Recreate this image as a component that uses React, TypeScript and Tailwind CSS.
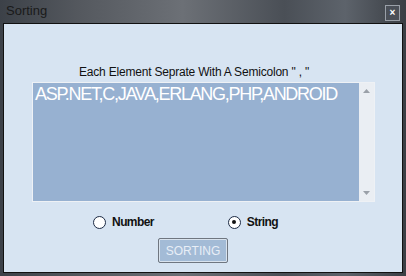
import { useState } from "react";

const Radio = ({ checked, label, onClick }: { checked: boolean; label: string; onClick: () => void }) => (
  <button type="button" onClick={onClick} className="flex items-center gap-[6px]">
    <span className="w-[13px] h-[13px] rounded-full border border-[#1c2a44] bg-white flex items-center justify-center">
      {checked && <span className="w-[4px] h-[4px] rounded-full bg-[#111]" />}
    </span>
    <span className="text-[12px] font-bold tracking-[-0.6px] text-[#111]">{label}</span>
  </button>
);

export default function App() {
  const [mode, setMode] = useState<"number" | "string">("string");

  return (
    <div
      className="w-[406px] h-[276px] flex flex-col bg-[linear-gradient(90deg,#3c4148_0%,#55595f_20%,#6c7076_45%,#4a4f56_70%,#5d636b_85%,#3a3e44_100%)]"
      style={{ fontFamily: '"Liberation Sans", Arial, sans-serif' }}
    >
      <div className="h-[23px] flex items-start justify-between pl-[6px] pr-[6px] pt-[3px]">
        <span className="text-[13px] text-[#1a1a1a] leading-[16px]">Sorting</span>
        <button
          type="button"
          className="w-[15px] h-[16px] mt-[2px] border border-[#9aa0a8] bg-[#4a4f57] flex items-center justify-center text-white text-[10px] font-bold leading-none"
        >
          ×
        </button>
      </div>
      <div className="mx-[3px] mb-[3px] flex-1 border border-[#111] bg-[#d7e4f2] flex flex-col items-center pt-[41px]">
        <div className="mr-[18px] text-[12px] tracking-[-0.2px] text-[#111] leading-[14px]">
          Each Element Seprate With A Semicolon " , "
        </div>
        <div className="mt-[3px] w-[343px] h-[120px] flex border border-[#eef1f5] ml-[1px]">
          <div className="flex-1 bg-[#97b1d1] pl-[2px] pt-[1px] text-[18px] tracking-[-1.3px] text-white leading-[20px]">
            ASP.NET,C,JAVA,ERLANG,PHP,ANDROID
          </div>
          <div className="w-[15px] bg-[#eaeef3] flex flex-col items-center justify-between py-[6px]">
            <svg width="7" height="4" viewBox="0 0 7 4">
              <path d="M0 4 L3.5 0 L7 4 Z" fill="#9aa0a8" />
            </svg>
            <svg width="7" height="4" viewBox="0 0 7 4">
              <path d="M0 0 L3.5 4 L7 0 Z" fill="#9aa0a8" />
            </svg>
          </div>
        </div>
        <div className="mt-[11px] flex items-center gap-[74px] mr-[35px]">
          <Radio checked={mode === "number"} label="Number" onClick={() => setMode("number")} />
          <Radio checked={mode === "string"} label="String" onClick={() => setMode("string")} />
        </div>
        <button
          type="button"
          className="mt-[7px] mr-[20px] w-[70px] h-[25px] rounded-[2px] border border-[#6f7680] bg-[#a3bbd6] text-[12px] text-[#e8eef6] shadow-[inset_0_0_0_1px_#d9e3ee]"
        >
          SORTING
        </button>
      </div>
    </div>
  );
}
